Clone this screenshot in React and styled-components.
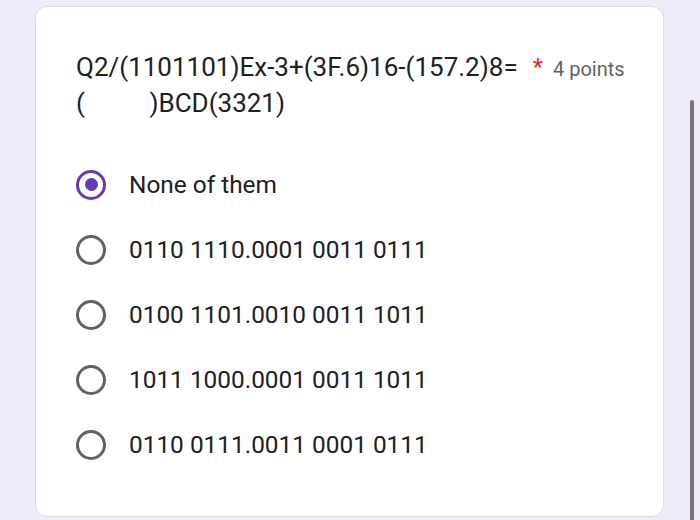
import styled, { createGlobalStyle } from 'styled-components';

const GlobalStyle = createGlobalStyle`
  html, body {
    margin: 0;
    padding: 0;
    background: #f0ebf8;
    font-family: Roboto, "Noto Sans", "Liberation Sans", sans-serif;
  }
`;

const Page = styled.div`
  width: 700px;
  height: 520px;
  overflow: hidden;
  position: relative;
  background: #f0ebf8;
  padding: 6px 0 0 35px;
  box-sizing: border-box;
`;

const Card = styled.div`
  width: 629px;
  height: 511px;
  box-sizing: border-box;
  background: #fff;
  border: 1px solid #dcd9e2;
  border-radius: 12px;
  padding: 42px 28px 0 40px;
`;

const Header = styled.div`
  display: flex;
  align-items: flex-start;
`;

const Title = styled.div`
  font-size: 26px;
  line-height: 36px;
  color: #202124;
  white-space: pre;
`;

const Star = styled.span`
  color: #d93025;
  font-size: 24px;
  line-height: 36px;
  margin-left: 15px;
`;

const Points = styled.span`
  color: #5f6368;
  font-size: 20px;
  line-height: 36px;
  margin-left: 10px;
  padding-top: 2px;
  white-space: nowrap;
`;

const Options = styled.div`
  display: flex;
  flex-direction: column;
  margin-top: 31px;
`;

const Row = styled.label`
  display: flex;
  align-items: center;
  height: 65px;
  gap: 23px;
`;

const Radio = styled.span`
  width: 30px;
  height: 30px;
  box-sizing: border-box;
  border-radius: 50%;
  border: 3.2px solid ${(p) => (p.checked ? '#673ab7' : '#5f6368')};
  display: flex;
  align-items: center;
  justify-content: center;
  flex-shrink: 0;

  &::after {
    content: '';
    width: 13px;
    height: 13px;
    border-radius: 50%;
    background: #673ab7;
    display: ${(p) => (p.checked ? 'block' : 'none')};
  }
`;

const OptionText = styled.span`
  font-size: 24.4px;
  color: #202124;
`;

const ScrollThumb = styled.div`
  position: absolute;
  left: 690px;
  top: 100px;
  width: 4px;
  height: 430px;
  border-radius: 2px;
  background: #79747e;
`;

const options = [
  'None of them',
  '0110 1110.0001 0011 0111',
  '0100 1101.0010 0011 1011',
  '1011 1000.0001 0011 1011',
  '0110 0111.0011 0001 0111',
];

export default function App() {
  return (
    <>
      <GlobalStyle />
      <Page>
        <Card>
          <Header>
            <Title>
              {'Q2/(1101101)Ex-3+(3F.6)16-(157.2)8='}
              <br />
              {'(          )BCD(3321)'}
            </Title>
            <Star>*</Star>
            <Points>4 points</Points>
          </Header>
          <Options>
            {options.map((o, i) => (
              <Row key={o}>
                <Radio checked={i === 0} />
                <OptionText>{o}</OptionText>
              </Row>
            ))}
          </Options>
        </Card>
        <ScrollThumb />
      </Page>
    </>
  );
}
